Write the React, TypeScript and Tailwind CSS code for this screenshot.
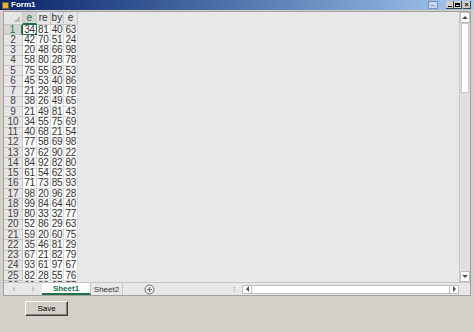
import React from 'react';

const data: string[][] = [
  ['34', '81', '40', '63'],
  ['42', '70', '51', '24'],
  ['20', '48', '66', '98'],
  ['58', '80', '28', '78'],
  ['75', '55', '82', '53'],
  ['45', '53', '40', '86'],
  ['21', '29', '98', '78'],
  ['38', '26', '49', '65'],
  ['21', '49', '81', '43'],
  ['34', '55', '75', '69'],
  ['40', '68', '21', '54'],
  ['77', '58', '69', '98'],
  ['37', '62', '90', '22'],
  ['84', '92', '82', '80'],
  ['61', '54', '62', '33'],
  ['71', '73', '85', '93'],
  ['98', '20', '96', '28'],
  ['99', '84', '64', '40'],
  ['80', '33', '32', '77'],
  ['52', '86', '29', '63'],
  ['59', '20', '60', '75'],
  ['35', '46', '81', '29'],
  ['67', '21', '82', '79'],
  ['93', '61', '97', '67'],
  ['82', '28', '55', '76'],
  ['30', '33', '37', '57'],
];

const headers = ['e', 're', 'by', 'e'];

const App: React.FC = () => {
  return (
    <div className="w-[474px] h-[332px] bg-[#d4d0c8] flex flex-col overflow-hidden font-['Liberation_Sans',Arial,sans-serif]">
      {/* title bar */}
      <div className="h-[10px] shrink-0 flex items-center bg-gradient-to-r from-[#0a246a] to-[#a6caf0] pl-[2px] pr-[3px]">
        <div className="w-[7px] h-[7px] bg-[#e8b040] border border-[#806020] mr-[2px]" />
        <span className="text-white font-bold text-[8px] leading-none">Form1</span>
        <div className="ml-auto flex items-center">
          <div className="w-[10px] h-[8px] bg-[#c8d8f0] border border-[#7090c0] flex items-center justify-center text-[6px] leading-none text-[#203060] mr-[8px]">↔</div>
          <div className="w-[8px] h-[8px] bg-[#d4d0c8] border-r border-b border-[#404040] flex items-end justify-center pb-px">
            <div className="w-[4px] h-px bg-black" />
          </div>
          <div className="w-[8px] h-[8px] bg-[#d4d0c8] border-r border-b border-[#404040] flex items-center justify-center">
            <div className="w-[5px] h-[4px] border border-black border-t-2" />
          </div>
          <div className="w-[8px] h-[8px] bg-[#d4d0c8] border-r border-b border-[#404040] ml-px flex items-center justify-center text-[7px] leading-none font-bold text-black">×</div>
        </div>
      </div>

      <div className="flex-1 flex flex-col px-[3px]">
        {/* spreadsheet */}
        <div className="h-[285px] mt-px shrink-0 flex flex-col border border-[#a0a0a0] bg-[#e8e8e8]">
          <div className="flex-1 flex min-h-0">
            <div className="flex-1 overflow-hidden text-[10px] leading-none">
              {/* header row */}
              <div className="flex h-[13px]">
                <div className="w-[19px] bg-[#e6e6e6] border-r border-b border-[#c6c6c6] relative">
                  <div className="absolute right-[2px] bottom-[2px] w-0 h-0 border-l-[6px] border-l-transparent border-b-[6px] border-b-[#b8b8b8]" />
                </div>
                {headers.map((h, i) => (
                  <div
                    key={i}
                    className={
                      i === 0
                        ? 'w-[13.75px] bg-[#d3d3d3] border-r border-b-2 border-r-[#c6c6c6] border-b-[#217346] text-[#217346] flex items-center justify-center'
                        : 'w-[13.75px] bg-[#e6e6e6] border-r border-b border-[#c6c6c6] text-[#333] flex items-center justify-center'
                    }
                  >
                    {h}
                  </div>
                ))}
              </div>
              {data.map((row, r) => (
                <div key={r} className="flex h-[10.25px]">
                  <div
                    className={
                      r === 0
                        ? 'w-[19px] bg-[#d3d3d3] border-r-2 border-b border-r-[#217346] border-b-[#c6c6c6] text-[#217346] flex items-center justify-center'
                        : 'w-[19px] bg-[#e6e6e6] border-r border-b border-[#c6c6c6] text-[#444] flex items-center justify-center'
                    }
                  >
                    {r + 1}
                  </div>
                  {row.map((v, c) => (
                    <div
                      key={c}
                      className="w-[13.75px] bg-white border-r border-b border-[#dcdcdc] text-[#333] flex items-center justify-end pr-px relative tracking-[-0.3px]"
                    >
                      {r === 0 && c === 0 && (
                        <div className="absolute top-[-1px] left-[-1px] right-[-1px] bottom-[-1px] border-[1.5px] border-[#217346]" />
                      )}
                      <span className="relative">{v}</span>
                      {r === 0 && c === 0 && (
                        <div className="absolute right-[-2px] bottom-[-2px] w-[3px] h-[3px] bg-[#217346]" />
                      )}
                    </div>
                  ))}
                </div>
              ))}
            </div>
            {/* vertical scrollbar */}
            <div className="w-[11px] flex flex-col bg-[#e0e0e0] border-l border-[#c8c8c8]">
              <div className="h-[11px] bg-white border border-[#c0c0c0] flex items-center justify-center">
                <div className="w-0 h-0 border-l-[3px] border-r-[3px] border-b-[3px] border-l-transparent border-r-transparent border-b-[#505050]" />
              </div>
              <div className="h-[70px] mx-px bg-white border border-[#c8c8c8]" />
              <div className="flex-1" />
              <div className="h-[11px] bg-white border border-[#c0c0c0] flex items-center justify-center">
                <div className="w-0 h-0 border-l-[3px] border-r-[3px] border-t-[3px] border-l-transparent border-r-transparent border-t-[#505050]" />
              </div>
            </div>
          </div>
          {/* tab bar */}
          <div className="h-[13px] shrink-0 flex items-stretch bg-[#e8e8e8] border-t border-[#c6c6c6] text-[8px] leading-none">
            <div className="w-[38px] flex items-center">
              <div className="ml-[8px] w-0 h-0 border-t-[3px] border-b-[3px] border-r-[3px] border-t-transparent border-b-transparent border-r-[#c4c4c4]" />
              <div className="ml-[17px] w-0 h-0 border-t-[3px] border-b-[3px] border-l-[3px] border-t-transparent border-b-transparent border-l-[#c4c4c4]" />
            </div>
            <div className="w-[49px] bg-white border-b-2 border-[#217346] border-r border-r-[#c6c6c6] pt-px flex items-center justify-center text-[#217346] font-bold">
              Sheet1
            </div>
            <div className="w-[32px] border-r border-[#c6c6c6] pt-px flex items-center justify-center text-[#333]">
              Sheet2
            </div>
            <div className="w-[52px] flex items-center justify-center">
              <svg width="11" height="11" viewBox="0 0 11 11">
                <circle cx="5.5" cy="5.5" r="4.5" fill="none" stroke="#707070" strokeWidth="1" />
                <path d="M5.5 3v5M3 5.5h5" stroke="#707070" strokeWidth="1" />
              </svg>
            </div>
            <div className="w-[67px] flex items-center justify-end pr-[7px]">
              <div className="flex flex-col gap-px">
                <div className="w-px h-px bg-[#a0a0a0]" />
                <div className="w-px h-px bg-[#a0a0a0]" />
                <div className="w-px h-px bg-[#a0a0a0]" />
              </div>
            </div>
            <div className="flex-1 flex items-center pr-[11px]">
              <div className="flex-1 h-[9px] flex bg-white border border-[#c0c0c0]">
                <div className="w-[9px] border-r border-[#c0c0c0] flex items-center justify-center">
                  <div className="w-0 h-0 border-t-[3px] border-b-[3px] border-r-[3px] border-t-transparent border-b-transparent border-r-[#505050]" />
                </div>
                <div className="flex-1" />
                <div className="w-[9px] border-l border-[#c0c0c0] flex items-center justify-center">
                  <div className="w-0 h-0 border-t-[3px] border-b-[3px] border-l-[3px] border-t-transparent border-b-transparent border-l-[#505050]" />
                </div>
              </div>
            </div>
          </div>
        </div>

        {/* bottom panel */}
        <div className="flex-1 pl-[22px] pt-[5px]">
          <button className="w-[43px] h-[15px] bg-[#d4d0c8] border border-t-white border-l-white border-r-[#404040] border-b-[#404040] shadow-[inset_-1px_-1px_0_#808080] text-[8px] text-black flex items-center justify-center">
            Save
          </button>
        </div>
      </div>
    </div>
  );
};

export default App;
